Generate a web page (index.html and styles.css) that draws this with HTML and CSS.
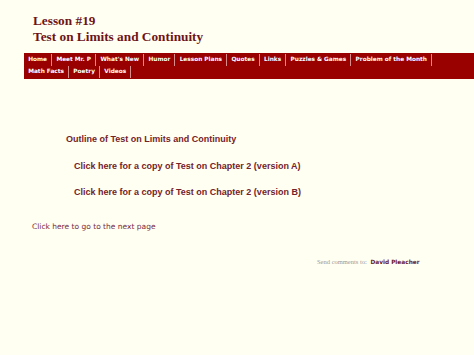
FILE: index.html
```html
<!DOCTYPE html>
<html lang="en">
<head>
  <meta charset="UTF-8">
  <title>Lesson #19</title>
  <link rel="stylesheet" href="styles.css">
</head>
<body>
  <div id="page">
    <h1>Lesson #19<br>Test on Limits and Continuity</h1>

    <nav class="menu">
      <a href="#">Home</a>
      <a href="#">Meet Mr. P</a>
      <a href="#">What's New</a>
      <a href="#">Humor</a>
      <a href="#">Lesson Plans</a>
      <a href="#">Quotes</a>
      <a href="#">Links</a>
      <a href="#">Puzzles &amp; Games</a>
      <a href="#">Problem of the Month</a>
      <a href="#">Math Facts</a>
      <a href="#">Poetry</a>
      <a href="#">Videos</a>
    </nav>

    <div class="content">
      <p class="outline"><a href="#">Outline of Test on Limits and Continuity</a></p>
      <p class="copy"><a href="#">Click here for a copy of Test on Chapter 2 (version A)</a></p>
      <p class="copy"><a href="#">Click here for a copy of Test on Chapter 2 (version B)</a></p>
    </div>

    <p class="next"><a href="#">Click here to go to the next page</a></p>

    <p class="comments">Send comments to: <a href="#">David Pleacher</a></p>
  </div>
</body>
</html>
```

FILE: styles.css
```css
body {
  margin: 0;
  background-color: #fffff2;
  font-family: "Liberation Sans", Arial, sans-serif;
  color: #7a1f24;
}

#page {
  padding: 13px 0 0 24px;
}

h1 {
  margin: 0 0 8px 9px;
  font-family: "Liberation Serif", "Times New Roman", serif;
  font-size: 13.3px;
  line-height: 16px;
  font-weight: bold;
  color: #6e1418;
}

.menu {
  display: flex;
  flex-wrap: wrap;
  background-color: #990000;
  padding: 1px 0 1px 0;
}

.menu a,
.menu a:visited {
  color: #fff;
  text-decoration: none;
  font-family: "DejaVu Sans", Verdana, sans-serif;
  font-size: 5.8px;
  font-weight: bold;
  padding: 2px 4.2px 3px 4.2px;
  border-right: 1px solid #d98c8c;
  line-height: 7px;
}

.content {
  padding: 55px 0 0 42px;
}

.content p {
  margin: 0;
  font-size: 9px;
  font-weight: bold;
}

.content a,
.content a:visited {
  color: #73222a;
  text-decoration: none;
}

.outline {
  line-height: 10px;
  margin-bottom: 17px !important;
}

.copy {
  padding-left: 8px;
  line-height: 10px;
  margin-bottom: 16px !important;
}

.next {
  margin: 25px 0 0 8px;
  font-family: "DejaVu Sans", sans-serif;
  font-size: 7.5px;
}

.next a,
.next a:visited {
  color: #7a2a3a;
  text-decoration: none;
}

.comments {
  margin: 27px 0 0 293px;
  font-family: "Liberation Serif", serif;
  font-size: 6.5px;
  color: #999;
}

.comments a,
.comments a:visited {
  font-family: "DejaVu Sans", Verdana, sans-serif;
  font-size: 5.8px;
  font-weight: bold;
  color: #6e1418;
  text-decoration: none;
  margin-left: 2px;
}
```
